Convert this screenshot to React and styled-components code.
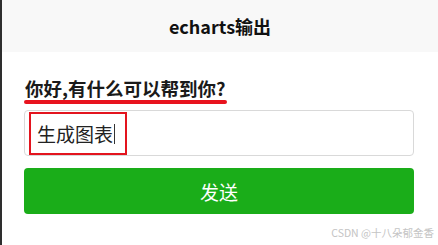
import styled, { createGlobalStyle } from "styled-components";

const GlobalStyle = createGlobalStyle`
	html, body {
		margin: 0;
		padding: 0;
		background: #fff;
	}
	body {
		font-family: "Noto Sans CJK SC", "Noto Sans", sans-serif;
	}
`;

function App() {
	return (
		<Page>
			<GlobalStyle />
			<Header>
				<Title>echarts输出</Title>
			</Header>
			<Content>
				<Heading>你好,有什么可以帮到你?</Heading>
				<InputBox>
					<Marker>
						生成图表
						<Caret />
					</Marker>
				</InputBox>
				<SendButton>发送</SendButton>
			</Content>
			<Watermark>CSDN @十八朵郁金香</Watermark>
		</Page>
	);
}

export default App;

const Page = styled.div`
	position: relative;
	min-height: 100vh;
	box-sizing: border-box;
	border-left: 2px solid #2e2e2e;
`;

const Header = styled.div`
	height: 52px;
	background-color: #f8f8f8;
	display: flex;
	align-items: center;
	justify-content: center;
`;

const Title = styled.h1`
	margin: 0;
	font-size: 18px;
	font-weight: 700;
	color: #111;
	line-height: 1;
`;

const Content = styled.div`
	padding: 24px 24px 0 22px;
	display: flex;
	flex-direction: column;
	align-items: flex-start;
`;

const Heading = styled.h2`
	margin: 0;
	padding: 0 3px 0 1px;
	font-size: 18.5px;
	font-weight: 700;
	line-height: 24px;
	color: #1a1a1a;
	&:after {
		content: "";
		display: block;
		height: 4px;
		margin: 0 -1px;
		border-radius: 2px;
		background-color: #e8131e;
	}
`;

const InputBox = styled.div`
	align-self: stretch;
	margin-top: 6px;
	height: 46px;
	box-sizing: border-box;
	border: 1px solid #d9d9d9;
	border-radius: 4px;
	padding: 1px 4px 0 4px;
	display: flex;
	align-items: stretch;
`;

const Marker = styled.span`
	display: flex;
	align-items: center;
	padding: 0 10px 0 6px;
	border: 2px solid #e3141e;
	font-size: 19px;
	color: #222;
`;

const Caret = styled.span`
	display: inline-block;
	width: 1px;
	height: 20px;
	margin-left: 1px;
	background-color: #333;
`;

const SendButton = styled.button`
	align-self: stretch;
	margin-top: 12px;
	height: 46px;
	border: none;
	border-radius: 4px;
	background-color: #1aad19;
	color: #fff;
	font-family: inherit;
	font-size: 19px;
	cursor: pointer;
`;

const Watermark = styled.span`
	position: absolute;
	right: 4px;
	bottom: 5px;
	font-size: 10.5px;
	color: #c4c4c4;
	font-family: "Noto Sans CJK SC", "Liberation Sans", sans-serif;
`;
